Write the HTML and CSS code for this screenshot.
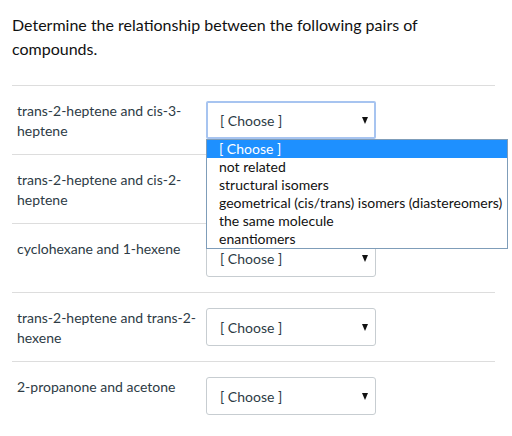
FILE: index.html
```html
<!DOCTYPE html>
<html lang="en">
<head>
    <meta charset="UTF-8">
    <title>Quiz question</title>
    <link rel="stylesheet" href="styles.css">
</head>
<body>
    <div class="question">
        <p class="question-text">Determine the relationship between the following pairs of compounds.</p>
        <div class="answers">
            <div class="answer">
                <div class="answer-label">trans-2-heptene and cis-3-heptene</div>
                <div class="select-wrap">
                    <div class="select focused">
                        <span class="select-text">[ Choose ]</span>
                        <span class="select-arrow"></span>
                    </div>
                    <ul class="dropdown">
                        <li class="selected">[ Choose ]</li>
                        <li>not related</li>
                        <li>structural isomers</li>
                        <li>geometrical (cis/trans) isomers (diastereomers)</li>
                        <li>the same molecule</li>
                        <li>enantiomers</li>
                    </ul>
                </div>
            </div>
            <div class="answer">
                <div class="answer-label">trans-2-heptene and cis-2-heptene</div>
                <div class="select-wrap">
                    <div class="select">
                        <span class="select-text">[ Choose ]</span>
                        <span class="select-arrow"></span>
                    </div>
                </div>
            </div>
            <div class="answer">
                <div class="answer-label">cyclohexane and 1-hexene</div>
                <div class="select-wrap">
                    <div class="select">
                        <span class="select-text">[ Choose ]</span>
                        <span class="select-arrow"></span>
                    </div>
                </div>
            </div>
            <div class="answer">
                <div class="answer-label">trans-2-heptene and trans-2-hexene</div>
                <div class="select-wrap">
                    <div class="select">
                        <span class="select-text">[ Choose ]</span>
                        <span class="select-arrow"></span>
                    </div>
                </div>
            </div>
            <div class="answer">
                <div class="answer-label">2-propanone and acetone</div>
                <div class="select-wrap">
                    <div class="select">
                        <span class="select-text">[ Choose ]</span>
                        <span class="select-arrow"></span>
                    </div>
                </div>
            </div>
        </div>
    </div>
</body>
</html>
```

FILE: styles.css
```css
body {
    margin: 0;
    background: #fff;
    font-family: Lato, "Liberation Sans", sans-serif;
    color: #2d3b45;
}

.question {
    padding: 0 17px 0 12px;
}

.question-text {
    margin: 0;
    padding: 13px 0 24px;
    font-size: 16px;
    line-height: 24px;
    color: #111;
    width: 430px;
}

.answer {
    display: flex;
    align-items: flex-start;
    border-top: 1px solid #ddd;
    padding: 15px 0 13px 5px;
    height: 40px;
}

.answer-label {
    width: 182px;
    margin-right: 7px;
    font-size: 14px;
    line-height: 20px;
}

.select-wrap {
    position: relative;
}

.select {
    box-sizing: border-box;
    width: 170px;
    height: 38px;
    display: flex;
    align-items: center;
    justify-content: space-between;
    padding: 0 7px 0 13px;
    border: 1px solid #c7cdd1;
    border-radius: 3px;
    background: #fff;
    font-size: 14px;
    color: #2d3b45;
}

.select.focused {
    border-color: #a7c4f0;
    border-width: 2px;
    padding-left: 12px;
    padding-right: 6px;
    border-radius: 2px;
}

.select-arrow {
    width: 0;
    height: 0;
    border-left: 3px solid transparent;
    border-right: 3px solid transparent;
    border-top: 7px solid #111;
}

.dropdown {
    position: absolute;
    top: 38px;
    left: 0;
    width: 300px;
    margin: 0;
    padding: 0;
    list-style: none;
    background: #fff;
    border: 1px solid #7f9db9;
    font-size: 14px;
    color: #111;
    z-index: 2;
}

.dropdown li {
    height: 18px;
    line-height: 18px;
    padding-left: 12px;
    white-space: nowrap;
}

.dropdown li.selected {
    background: #1e90ff;
    color: #fff;
}
```
